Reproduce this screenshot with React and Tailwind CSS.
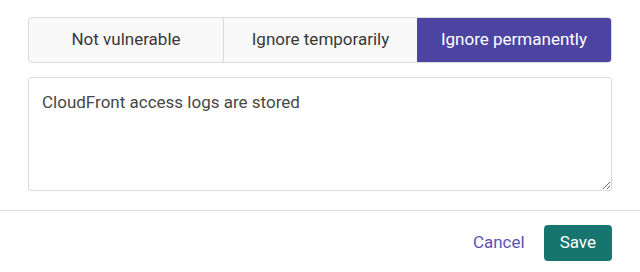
import { useState } from "react";

const options = ["Not vulnerable", "Ignore temporarily", "Ignore permanently"];

const App = () => {
  const [selected, setSelected] = useState("Ignore permanently");
  const [note, setNote] = useState("CloudFront access logs are stored");

  return (
    <div className="w-[640px] h-[272px] bg-white font-['Roboto',sans-serif] text-[17px]">
      <div className="px-[28px] pt-[17px]">
        <div className="grid grid-cols-3 h-[46px] rounded-[4px] border border-[#dcdcde] bg-[#f9f9f9] overflow-hidden">
          {options.map((opt, i) => (
            <button
              key={opt}
              type="button"
              onClick={() => setSelected(opt)}
              className={
                selected === opt
                  ? "bg-[#4b44a0] text-white"
                  : i > 0
                  ? "border-l border-[#dcdcde] text-[#383838]"
                  : "text-[#383838]"
              }
            >
              {opt}
            </button>
          ))}
        </div>

        <textarea
          value={note}
          onChange={(e) => setNote(e.target.value)}
          className="mt-[14px] block w-full h-[114px] rounded-[3px] border border-[#dcdcde] px-[13px] pt-[12px] leading-[24px] text-[#474747] outline-none"
        />
      </div>

      <div className="mt-[19px] border-t border-[#dcdcde]" />

      <div className="flex items-center justify-end gap-[19px] px-[28px] pt-[14px]">
        <button type="button" className="text-[#5c52b5]">
          Cancel
        </button>
        <button
          type="button"
          className="h-[36px] px-[16px] rounded-[4px] bg-[#17756f] text-white"
        >
          Save
        </button>
      </div>
    </div>
  );
};

export default App;
